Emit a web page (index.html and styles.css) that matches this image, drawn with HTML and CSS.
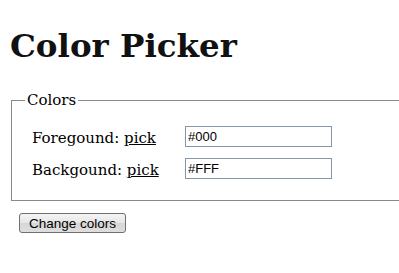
FILE: index.html
```html
<!DOCTYPE html>
<html>
<head>
    <title>Color Picker</title>
    <link rel="stylesheet" href="styles.css">
</head>
<body>
    <h1>Color Picker</h1>

    <form class="picker">
        <fieldset>
            <legend>Colors</legend>
            <div class="rows">
                <label>Foregound: <a href="#">pick</a></label>
                <input type="text" id="fg" value="#000">
                <label>Backgound: <a href="#">pick</a></label>
                <input type="text" id="bg" value="#FFF">
            </div>
        </fieldset>
        <button type="button">Change colors</button>
    </form>
</body>
</html>
```

FILE: styles.css
```css
html {
    overflow: hidden;
}
body {
    font-family: "DejaVu Serif", serif;
    font-size: 15px;
    color: #000;
    margin: 8px;
    width: 440px;
}
h1 {
    font-size: 32.5px;
    font-weight: bold;
    margin: 18px 0 26px 2px;
    color: #111;
}
fieldset {
    margin: 0 0 0 3px;
    border: 1px solid #8a8a8a;
    padding: 17px 20px 21px 20px;
}
legend {
    margin-left: -7px;
    padding: 0 2px;
}
.rows {
    display: grid;
    grid-template-columns: 153px 147px;
    row-gap: 11px;
    align-items: center;
}
.rows label {
    position: relative;
    top: 1px;
}
.rows a {
    color: #000;
}
input[type="text"] {
    box-sizing: border-box;
    height: 21px;
    border: 1px solid #8497a9;
    padding: 1px 2px;
    font-family: "Liberation Sans", Arial, sans-serif;
    font-size: 13px;
    color: #000;
}
button {
    margin: 12px 0 0 11px;
    height: 20px;
    width: 107px;
    padding: 0;
    font-family: "Liberation Sans", Arial, sans-serif;
    font-size: 13.5px;
    color: #000;
    border: 1px solid #707070;
    border-radius: 3px;
    background: linear-gradient(#f4f4f4, #e6e6e6 50%, #d6d6d6 51%, #dedede);
}
```
